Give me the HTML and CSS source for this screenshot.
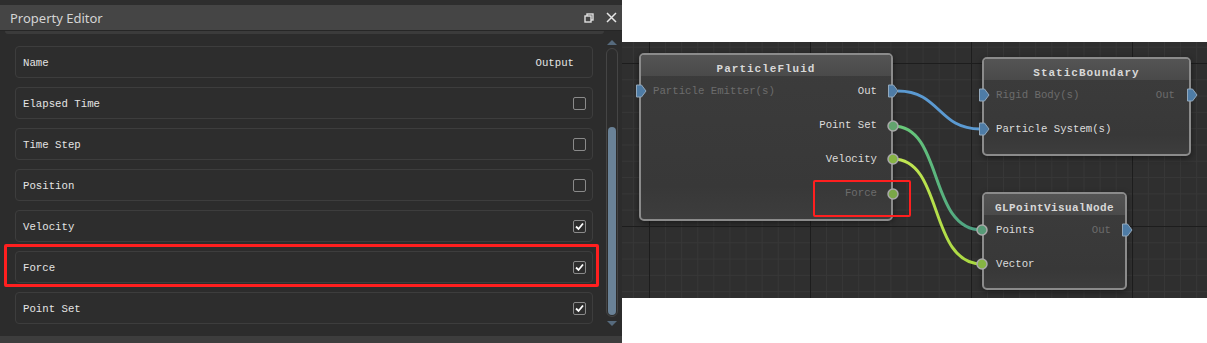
FILE: index.html
```html
<!DOCTYPE html>
<html lang="en">
<head>
    <meta charset="UTF-8">
    <title>Property Editor</title>
    <link rel="stylesheet" href="styles.css">
</head>
<body>
<div class="page">
    <div class="editor">
        <div class="editor-top"></div>
        <div class="titlebar">
            <span class="title">Property Editor</span>
            <span class="title-icons">
                <svg width="10" height="10" viewBox="0 0 10 10"><rect x="3" y="1" width="6" height="6" fill="none" stroke="#e0e0e0" stroke-width="1.4"/><rect x="1" y="3" width="6" height="6" fill="#454545" stroke="#e0e0e0" stroke-width="1.4"/></svg>
                <svg width="11" height="11" viewBox="0 0 11 11"><path d="M1 1 L10 10 M10 1 L1 10" stroke="#e6e6e6" stroke-width="1.5"/></svg>
            </span>
        </div>
        <div class="editor-body">
            <div class="head-bar"></div>
            <div class="body-main">
                <div class="rows">
                    <div class="prop-row"><span>Name</span><span class="prop-value">Output</span></div>
                    <div class="prop-row"><span>Elapsed Time</span><span class="check"></span></div>
                    <div class="prop-row"><span>Time Step</span><span class="check"></span></div>
                    <div class="prop-row"><span>Position</span><span class="check"></span></div>
                    <div class="prop-row"><span>Velocity</span><span class="check checked"><svg width="9" height="9" viewBox="0 0 9 9"><path d="M1 4.5 L3.5 7 L8 1.5" fill="none" stroke="#fff" stroke-width="1.8"/></svg></span></div>
                    <div class="prop-row"><span>Force</span><span class="check checked"><svg width="9" height="9" viewBox="0 0 9 9"><path d="M1 4.5 L3.5 7 L8 1.5" fill="none" stroke="#fff" stroke-width="1.8"/></svg></span></div>
                    <div class="prop-row"><span>Point Set</span><span class="check checked"><svg width="9" height="9" viewBox="0 0 9 9"><path d="M1 4.5 L3.5 7 L8 1.5" fill="none" stroke="#fff" stroke-width="1.8"/></svg></span></div>
                </div>
                <div class="scrollbar">
                    <div class="arrow-up"></div>
                    <div class="track"><div class="thumb"></div></div>
                    <div class="arrow-down"></div>
                </div>
            </div>
        </div>
        <div class="editor-foot"></div>
        <div class="mark mark-force"></div>
    </div>

    <div class="graph">
        <div class="node node-fluid">
            <div class="node-head">ParticleFluid</div>
            <div class="node-rows">
                <div class="port-row"><span class="dim">Particle Emitter(s)</span><span>Out</span></div>
                <div class="port-row"><span></span><span>Point Set</span></div>
                <div class="port-row"><span></span><span>Velocity</span></div>
                <div class="port-row"><span></span><span class="dim">Force</span></div>
            </div>
        </div>
        <div class="node node-boundary">
            <div class="node-head">StaticBoundary</div>
            <div class="node-rows">
                <div class="port-row"><span class="dim">Rigid Body(s)</span><span class="dim">Out</span></div>
                <div class="port-row"><span>Particle System(s)</span><span></span></div>
            </div>
        </div>
        <div class="node node-visual">
            <div class="node-head">GLPointVisualNode</div>
            <div class="node-rows">
                <div class="port-row"><span>Points</span><span class="dim">Out</span></div>
                <div class="port-row"><span>Vector</span><span></span></div>
            </div>
        </div>

        <svg class="wires" width="585" height="256" viewBox="0 0 585 256">
            <defs>
                <linearGradient id="gGreen" x1="0" y1="0" x2="1" y2="0">
                    <stop offset="0" stop-color="#6ccf78"/>
                    <stop offset="1" stop-color="#4a9c84"/>
                </linearGradient>
                <linearGradient id="gYellow" x1="0" y1="0" x2="1" y2="0">
                    <stop offset="0" stop-color="#c4e855"/>
                    <stop offset="1" stop-color="#a6d640"/>
                </linearGradient>
            </defs>
            <path d="M276 49 C318 49 316 87 358 87" fill="none" stroke="#5b9ad2" stroke-width="3"/>
            <path d="M271 84 C322 84 306 188 360 188" fill="none" stroke="url(#gGreen)" stroke-width="3"/>
            <path d="M271 117 C322 117 306 222 360 222" fill="none" stroke="url(#gYellow)" stroke-width="3"/>

            <g fill="#4e7ca6" stroke="#93a9bd" stroke-width="1">
                <path d="M14.5 43 h5 l4.5 6 l-4.5 6 h-5 z"/>
                <path d="M266.5 43 h5 l4.5 6 l-4.5 6 h-5 z"/>
                <path d="M357.5 47 h5 l4.5 6 l-4.5 6 h-5 z"/>
                <path d="M357.5 81 h5 l4.5 6 l-4.5 6 h-5 z"/>
                <path d="M565.5 47 h5 l4.5 6 l-4.5 6 h-5 z"/>
                <path d="M500.5 182 h5 l4.5 6 l-4.5 6 h-5 z"/>
            </g>
            <g stroke="#a9a9a9" stroke-width="1.5">
                <circle cx="271" cy="84" r="5" fill="#62a46e"/>
                <circle cx="271" cy="117" r="5" fill="#86b443"/>
                <circle cx="271" cy="152" r="5" fill="#7aa748"/>
                <circle cx="360" cy="188" r="5" fill="#579a77"/>
                <circle cx="360" cy="222" r="5" fill="#86b443"/>
            </g>
        </svg>
        <div class="mark mark-port"></div>
    </div>
</div>
</body>
</html>
```

FILE: styles.css
```css
body {
    margin: 0;
    background: #ffffff;
    font-family: "Liberation Mono", "DejaVu Sans Mono", monospace;
}

.page {
    display: flex;
    align-items: flex-start;
}

/* property editor */
.editor {
    position: relative;
    width: 622px;
    height: 343px;
    background: #2c2c2c;
    display: flex;
    flex-direction: column;
}
.editor-top {
    height: 5px;
    background: #2e2e2e;
}
.titlebar {
    height: 25px;
    background: #454545;
    border-bottom: 1px solid #262626;
    display: flex;
    align-items: center;
    justify-content: space-between;
    padding: 0 5px 0 10px;
}
.title {
    font-family: "Noto Sans", "Open Sans", sans-serif;
    font-size: 13px;
    color: #d4d4d4;
}
.title-icons {
    display: flex;
    align-items: center;
    gap: 12px;
}
.editor-body {
    flex: 1;
    padding: 0 0 0 4px;
}
.head-bar {
    height: 3px;
    margin: 0 18px 0 1px;
    background: #3b3b3b;
    border-radius: 0 0 3px 3px;
}
.body-main {
    display: flex;
}
.rows {
    width: 578px;
    margin-left: 11px;
    padding-top: 12px;
    display: flex;
    flex-direction: column;
    gap: 9px;
}
.prop-row {
    height: 32px;
    box-sizing: border-box;
    border: 1px solid #3d3d3d;
    border-radius: 4px;
    background: #2d2d2d;
    display: flex;
    align-items: center;
    justify-content: space-between;
    padding: 1px 6px 0 7px;
    font-size: 10.7px;
    color: #e4e4e4;
}
.prop-value {
    padding-right: 12px;
}
.check {
    width: 13px;
    height: 13px;
    box-sizing: border-box;
    border: 1.5px solid #8a8a8a;
    border-radius: 2px;
    display: flex;
    align-items: center;
    justify-content: center;
}

/* scrollbar */
.scrollbar {
    width: 12px;
    margin-left: 13px;
    padding-top: 6px;
    display: flex;
    flex-direction: column;
    align-items: center;
}
.arrow-up {
    width: 0;
    height: 0;
    border-left: 5px solid transparent;
    border-right: 5px solid transparent;
    border-bottom: 5px solid #566a7d;
}
.track {
    margin-top: 3px;
    width: 12px;
    height: 269px;
    box-sizing: border-box;
    border: 1px solid #454545;
    border-radius: 6px;
    padding: 78px 1px 1px;
}
.thumb {
    height: 188px;
    background: #6a8297;
    border-radius: 5px;
}
.arrow-down {
    margin-top: 4px;
    width: 0;
    height: 0;
    border-left: 5px solid transparent;
    border-right: 5px solid transparent;
    border-top: 5px solid #566a7d;
}
.editor-foot {
    height: 7px;
    background: #3d3d3d;
}

/* red annotations */
.mark {
    position: absolute;
    border: 3px solid #ff1f1f;
    border-radius: 2px;
    box-sizing: border-box;
}
.mark-force {
    left: 4px;
    top: 244px;
    width: 595px;
    height: 43px;
}
.mark-port {
    left: 191px;
    top: 138px;
    width: 98px;
    height: 37px;
    border-width: 2px;
}

/* node graph */
.graph {
    position: relative;
    margin-top: 42px;
    width: 585px;
    height: 256px;
    background-color: #2f2f2f;
    background-image:
        linear-gradient(to right, #1d1d1d 1px, transparent 1px),
        linear-gradient(to bottom, #1d1d1d 1px, transparent 1px),
        linear-gradient(to right, #373737 1px, transparent 1px),
        linear-gradient(to bottom, #373737 1px, transparent 1px);
    background-size: 161px 163px, 161px 163px, 16.1px 16.3px, 16.1px 16.3px;
    background-position: 27px 0, 0 21px, 27px 0, 0 21px;
    overflow: hidden;
}
.wires {
    position: absolute;
    left: 0;
    top: 0;
}
.node {
    position: absolute;
    box-sizing: border-box;
    border: 2px solid #8b8b8b;
    border-radius: 5px;
    background: linear-gradient(#3c3c3c, #383838 80%, #3d3d3d);
    box-shadow: 0 2px 6px rgba(0, 0, 0, 0.45);
    color: #dcdcdc;
    font-size: 10.7px;
}
.node-fluid {
    left: 17px;
    top: 11px;
    width: 254px;
    height: 168px;
}
.node-boundary {
    left: 360px;
    top: 15px;
    width: 209px;
    height: 99px;
}
.node-visual {
    left: 360px;
    top: 150px;
    width: 145px;
    height: 98px;
}
.node-head {
    height: 21px;
    background: linear-gradient(#545454, #4a4a4a);
    border-radius: 3px 3px 0 0;
    text-align: center;
    line-height: 28px;
    font-size: 11px;
    font-weight: bold;
    letter-spacing: 1px;
    color: #d8d8d8;
}
.node-visual .node-head {
    letter-spacing: 0.4px;
}
.node-rows {
    margin-top: -2px;
    padding: 0 14px 0 12px;
}
.port-row {
    height: 34px;
    display: flex;
    align-items: center;
    justify-content: space-between;
}
.dim {
    color: #6c6c6c;
}
```
